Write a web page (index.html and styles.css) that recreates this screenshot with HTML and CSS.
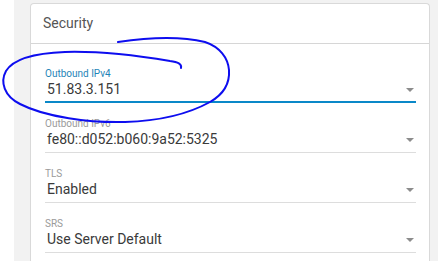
FILE: index.html
```html
<!DOCTYPE html>
<html>
<head>
<meta charset="utf-8">
<link rel="stylesheet" href="styles.css">
</head>
<body>
<div class="shell">
  <div class="gutter"></div>
  <main class="content">
    <section class="card">
      <header class="card-head">Security</header>
      <div class="fields">
        <div class="field focused">
          <div class="label">Outbound IPv4</div>
          <div class="value-row"><span class="value">51.83.3.151</span><span class="arrow"></span></div>
        </div>
        <div class="field">
          <div class="label">Outbound IPv6</div>
          <div class="value-row"><span class="value">fe80::d052:b060:9a52:5325</span><span class="arrow"></span></div>
        </div>
        <div class="field">
          <div class="label">TLS</div>
          <div class="value-row"><span class="value">Enabled</span><span class="arrow"></span></div>
        </div>
        <div class="field">
          <div class="label">SRS</div>
          <div class="value-row"><span class="value">Use Server Default</span><span class="arrow"></span></div>
        </div>
      </div>
    </section>
  </main>
</div>
<svg class="scribble" width="438" height="261" viewBox="0 0 438 261">
  <path d="M118,42 C145,38 180,36 205,42 C220,47 228,58 229,70 C230,84 224,94 210,102 C190,113 160,121 125,122 C90,123 45,117 20,104 C4,96 0,82 6,71 C14,58 38,53 65,52 C100,51 140,56 170,61 C178,62 182,64 181,68" fill="none" stroke="#0d0def" stroke-width="2" stroke-linecap="round"/>
</svg>
</body>
</html>
```
FILE: styles.css
```css
html, body {
  margin: 0;
  padding: 0;
  background: #ffffff;
  font-family: Roboto, "Liberation Sans", sans-serif;
  overflow: hidden;
}
.shell {
  display: flex;
  height: 261px;
  overflow: hidden;
}
.gutter {
  width: 14px;
  background: #ffffff;
}
.content {
  flex: 1;
  box-sizing: border-box;
  height: 261px;
  background: #f2f2f2;
  padding: 3px 8px 0 16px;
  overflow: hidden;
}
.card {
  box-sizing: border-box;
  height: 100%;
  background: #ffffff;
  border: 1px solid #d9d9d9;
  border-bottom: none;
  border-radius: 4px 4px 0 0;
}
.card-head {
  height: 39px;
  line-height: 38px;
  border-bottom: 1px solid #d6d6d6;
  padding-left: 12px;
  font-size: 14px;
  color: #555555;
}
.fields {
  padding: 9px 13px 0 14px;
}
.field {
  box-sizing: border-box;
  height: 50px;
  padding-top: 15px;
  border-bottom: 1px solid #dddddd;
}
.field.focused {
  border-bottom: 2px solid #0a88c8;
}
.label {
  font-size: 10px;
  line-height: 11px;
  color: #9a9a9a;
}
.field.focused .label {
  color: #1f85b8;
}
.value-row {
  display: flex;
  justify-content: space-between;
  align-items: center;
  height: 20px;
  padding-left: 2px;
}
.value {
  font-size: 14px;
  line-height: 20px;
  color: #3a3a3a;
}
.arrow {
  width: 0;
  height: 0;
  border-left: 4.5px solid transparent;
  border-right: 4.5px solid transparent;
  border-top: 4px solid #8c8c8c;
  margin-right: 2px;
  margin-top: 1px;
}
.scribble {
  position: absolute;
  left: 0;
  top: 0;
  pointer-events: none;
}
```
